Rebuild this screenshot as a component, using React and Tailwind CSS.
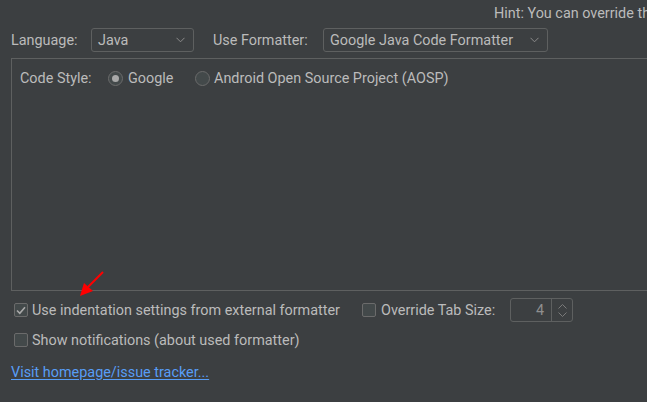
import React from "react";

function Chevron() {
  return (
    <svg width="9" height="6" viewBox="0 0 9 6" className="shrink-0">
      <path d="M0.5 0.8 L4.5 4.8 L8.5 0.8" fill="none" stroke="#8c8c8c" strokeWidth="1" />
    </svg>
  );
}

function Combo({ label, width }) {
  return (
    <div
      className={`flex items-center justify-between h-[24px] border border-[#5e6060] rounded-[3px] bg-[#3c3f41] pl-[6px] pr-[8px] ${width}`}
    >
      <span className="whitespace-nowrap">{label}</span>
      <Chevron />
    </div>
  );
}

function Checkbox({ checked }) {
  return (
    <div className="w-[14px] h-[14px] shrink-0 rounded-[2px] border border-[#6b6b6b] bg-[#43494a] flex items-center justify-center">
      {checked && (
        <svg width="10" height="9" viewBox="0 0 10 9">
          <path d="M1 4.5 L3.8 7.3 L9 1.2" fill="none" stroke="#a9a9a9" strokeWidth="1.6" />
        </svg>
      )}
    </div>
  );
}

function Radio({ checked }) {
  return (
    <div className="w-[15px] h-[15px] shrink-0 rounded-full border border-[#6b6b6b] bg-[#43494a] flex items-center justify-center">
      {checked && <div className="w-[7px] h-[7px] rounded-full bg-[#a8a8a8]" />}
    </div>
  );
}

export default function App() {
  return (
    <div
      className="relative w-[647px] h-[402px] overflow-hidden bg-[#3c3f41] text-[#bbbbbb] text-[14.4px] leading-[17px]"
      style={{ fontFamily: 'Roboto, "Liberation Sans", Arial, sans-serif' }}
    >
      <div className="h-[28px] pl-[494px] pt-[5px] whitespace-nowrap overflow-hidden">
        Hint: You can override th
      </div>

      <div className="flex items-center h-[24px]">
        <span className="ml-[11px] w-[80px] whitespace-nowrap">Language:</span>
        <Combo label="Java" width="w-[103px]" />
        <span className="ml-[19px] w-[110px] whitespace-nowrap">Use Formatter:</span>
        <Combo label="Google Java Code Formatter" width="w-[225px]" />
      </div>

      <div className="mt-[6px] ml-[11px] w-[637px] h-[233px] border border-[#5e6060]">
        <div className="flex items-center mt-[10px] h-[18px]">
          <span className="ml-[8px] w-[88px] whitespace-nowrap">Code Style:</span>
          <Radio checked />
          <span className="ml-[5px] w-[67px] whitespace-nowrap">Google</span>
          <Radio />
          <span className="ml-[4px] whitespace-nowrap">Android Open Source Project (AOSP)</span>
        </div>
      </div>

      <div className="flex items-center h-[24px] mt-[7px]">
        <div className="ml-[14px]">
          <Checkbox checked />
        </div>
        <span className="ml-[4px] w-[330px] whitespace-nowrap">
          Use indentation settings from external formatter
        </span>
        <Checkbox />
        <span className="ml-[5px] w-[129px] whitespace-nowrap">Override Tab Size:</span>
        <div className="flex h-[24px] w-[63px] border border-[#5e6060] rounded-[3px]">
          <div className="flex-1 flex items-center justify-end pr-[7px] text-[#8f8f8f]">4</div>
          <div className="w-[21px] border-l border-[#5e6060] flex flex-col items-center justify-center gap-[3px]">
            <svg width="9" height="5" viewBox="0 0 9 5">
              <path d="M0.5 4.5 L4.5 0.5 L8.5 4.5" fill="none" stroke="#7a7a7a" strokeWidth="1" />
            </svg>
            <svg width="9" height="5" viewBox="0 0 9 5">
              <path d="M0.5 0.5 L4.5 4.5 L8.5 0.5" fill="none" stroke="#7a7a7a" strokeWidth="1" />
            </svg>
          </div>
        </div>
      </div>

      <div className="flex items-center h-[18px] mt-[9px]">
        <div className="ml-[14px]">
          <Checkbox />
        </div>
        <span className="ml-[4px] whitespace-nowrap">Show notifications (about used formatter)</span>
      </div>

      <div className="ml-[11px] mt-[14px] h-[18px] flex items-center">
        <span className="text-[#589df6] underline underline-offset-[2px] whitespace-nowrap">
          Visit homepage/issue tracker...
        </span>
      </div>

      <svg className="absolute left-0 top-0 pointer-events-none" width="647" height="402">
        <line x1="103" y1="272" x2="88" y2="287" stroke="#ff0000" strokeWidth="2" />
        <polygon points="80,296 84,283 93,291" fill="#ff0000" />
      </svg>
    </div>
  );
}
